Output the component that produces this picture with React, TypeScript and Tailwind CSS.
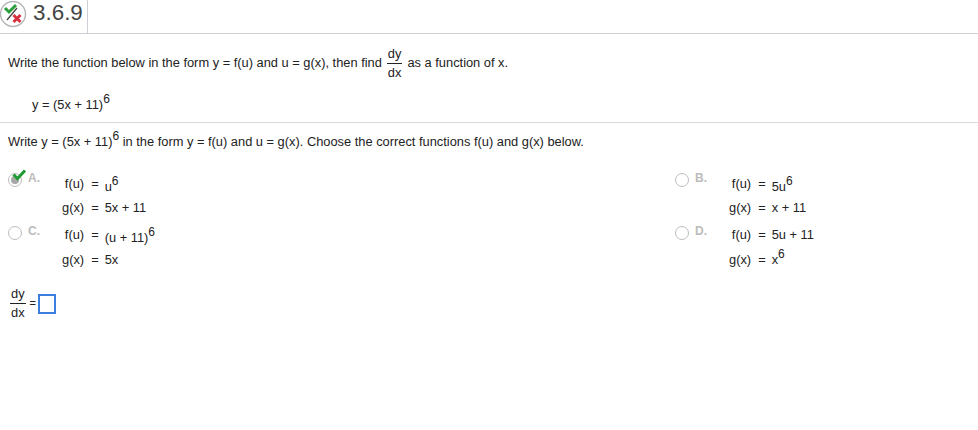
import type { ReactNode } from 'react';

function Frac({ top, bottom }: { top: string; bottom: string }) {
  return (
    <span className="inline-flex flex-col items-center leading-[14px]">
      <span className="border-b border-[#222] px-[1px] pb-[2px]">{top}</span>
      <span className="px-[1px] pt-[2px]">{bottom}</span>
    </span>
  );
}

function Sup({ children }: { children: ReactNode }) {
  return <span className="relative -top-[6px] text-[12px] leading-none">{children}</span>;
}

function StatusIcon() {
  return (
    <svg width="27" height="28" viewBox="0 0 27 28" className="shrink-0">
      <circle cx="13" cy="14" r="12.5" fill="#fff" stroke="#b5b5b5" strokeWidth="1.4" />
      <path d="M7 20 L17 8" stroke="#444" strokeWidth="1.3" />
      <path d="M5 8 L9 12 L16 5" fill="none" stroke="#2e9e3f" strokeWidth="3" />
      <path d="M13.5 15 L20.5 22 M20.5 15 L13.5 22" stroke="#d9303f" strokeWidth="3" />
    </svg>
  );
}

function Radio({ checked }: { checked?: boolean }) {
  return (
    <span className="relative mt-[1px] block h-[14px] w-[14px] shrink-0 rounded-full border border-[#bdbdbd] bg-white">
      {checked && (
        <>
          <span className="absolute left-[2px] top-[2px] h-[8px] w-[8px] rounded-full bg-[#a8a8a8]" />
          <svg width="15" height="12" viewBox="0 0 15 12" className="absolute -top-[5px] left-[3px]">
            <path d="M1.5 5.5 L5.5 9.5 L13 1.5" fill="none" stroke="#1f9a35" strokeWidth="3" />
          </svg>
        </>
      )}
    </span>
  );
}

function Choice({
  letter,
  checked,
  fu,
  gx,
  className,
  lower,
}: {
  letter: string;
  checked?: boolean;
  fu: ReactNode;
  gx: ReactNode;
  className?: string;
  lower?: boolean;
}) {
  const fuGap = lower ? 'mt-[3px]' : 'mt-[5px]';
  const gxGap = lower ? 'mt-[11px]' : 'mt-[10px]';
  return (
    <div className={`flex ${className ?? ''}`}>
      <div className="flex w-[54px] shrink-0 items-start gap-[6px]">
        <Radio checked={checked} />
        <span className="text-[12px] font-bold leading-[13px] text-[#bcbcbc]">{letter}</span>
      </div>
      <div className="grid grid-cols-[auto_1fr] gap-x-[7px] leading-[14px]">
        <span className={`${fuGap} text-right`}>f(u)</span>
        <span className={`${fuGap} flex gap-[6px]`}>
          <span>=</span>
          <span className="translate-y-[3px]">{fu}</span>
        </span>
        <span className={`${gxGap} text-right`}>g(x)</span>
        <span className={`${gxGap} flex gap-[6px]`}>
          <span>=</span>
          <span>{gx}</span>
        </span>
      </div>
    </div>
  );
}

export default function App() {
  return (
    <div className="h-[430px] w-[978px] overflow-hidden bg-white font-['Liberation_Sans',Arial,sans-serif] text-[12.85px] text-[#222]">
      <div className="flex h-[34px] border-b border-[#cfcfd6]">
        <div className="flex h-[33px] w-[88px] items-start gap-[6px] border-r border-[#cfcfd6]">
          <StatusIcon />
          <span className="text-[22.4px] leading-[26px] text-[#444]">3.6.9</span>
        </div>
      </div>

      <div className="flex items-center pl-[8px] pt-[10px]">
        <span className="translate-y-[1px]">Write the function below in the form y = f(u) and u = g(x), then find</span>
        <span className="ml-[5px] mr-[5px]">
          <Frac top="dy" bottom="dx" />
        </span>
        <span className="translate-y-[1px]">as a function of x.</span>
      </div>

      <div className="mt-[15px] h-[27px] pl-[32px] leading-[20px]">
        y = (5x + 11)
        <Sup>6</Sup>
      </div>

      <div className="border-t border-[#d8d8d8] pl-[8px] pt-[11px] leading-[16px]">
        Write y = (5x + 11)
        <Sup>6</Sup> in the form y = f(u) and u = g(x). Choose the correct functions f(u) and g(x) below.
      </div>

      <div className="mt-[22px] grid grid-cols-[667px_1fr] pl-[8px]">
        <Choice
          letter="A."
          checked
          fu={
            <>
              u<Sup>6</Sup>
            </>
          }
          gx="5x + 11"
        />
        <Choice
          letter="B."
          fu={
            <>
              5u<Sup>6</Sup>
            </>
          }
          gx="x + 11"
        />
        <Choice
          letter="C."
          lower
          className="mt-[10px]"
          fu={
            <>
              (u + 11)<Sup>6</Sup>
            </>
          }
          gx="5x"
        />
        <Choice
          letter="D."
          lower
          className="mt-[10px]"
          fu={<span className="relative -top-[3px]">5u + 11</span>}
          gx={
            <>
              x<Sup>6</Sup>
            </>
          }
        />
      </div>

      <div className="mt-[20px] flex items-center pl-[10px]">
        <Frac top="dy" bottom="dx" />
        <span className="ml-[4px] text-[11px]">=</span>
        <span className="ml-[2px] h-[20px] w-[18px] border-2 border-[#3d7fdc] bg-white" />
      </div>
    </div>
  );
}
